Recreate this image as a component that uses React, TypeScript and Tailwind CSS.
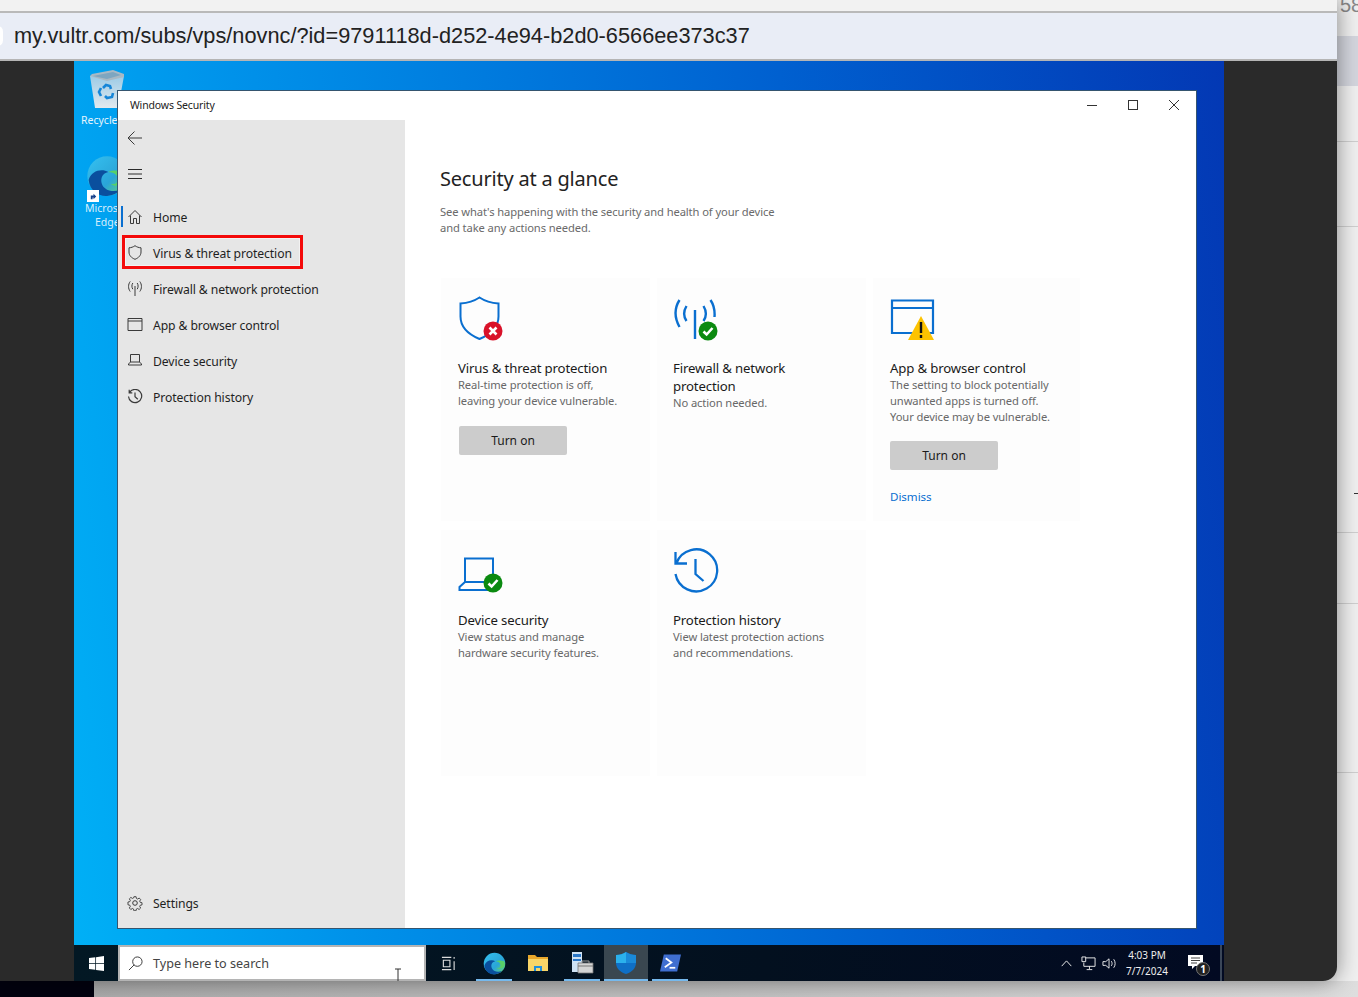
import React from "react";

const seg = "font-['Noto_Sans','Open_Sans',sans-serif]";

function Shield({ className = "" }: { className?: string }) {
  return (
    <svg viewBox="0 0 16 16" className={className} fill="none" stroke="#3a3a3a" strokeWidth="1">
      <path d="M8 .700c1.800 1.300 3.800 2 6 2.100v4.200c0 3.400-2.300 5.800-6 7.300-3.700-1.500-6-3.900-6-7.300V2.800c2.200-.1 4.200-.8 6-2.100z" />
    </svg>
  );
}

function NavIcon({ name }: { name: string }) {
  const c = "h-4 w-4 shrink-0";
  const p = { fill: "none", stroke: "#3a3a3a", strokeWidth: 1 };
  if (name === "home")
    return (
      <svg viewBox="0 0 16 16" className={c} {...p}>
        <path d="M1.500 8 8 1.500 14.500 8M3.500 6.500V14.500H6.500V9.500H9.500V14.500H12.500V6.500" />
      </svg>
    );
  if (name === "shield") return <Shield className={c} />;
  if (name === "wifi")
    return (
      <svg viewBox="0 0 16 16" className={c} {...p}>
        <path d="M8 5v10M5.800 2C4.600 4 4.600 6.200 5.800 8.200M10.200 2c1.200 2 1.200 4.200 0 6.200M3.200.500C1 3.500 1 7.500 3.200 10.500M12.800.500C15 3.500 15 7.500 12.800 10.500" />
      </svg>
    );
  if (name === "app")
    return (
      <svg viewBox="0 0 16 16" className={c} {...p}>
        <path d="M1 1.500H15V13.500H1ZM1 4H15" />
      </svg>
    );
  if (name === "device")
    return (
      <svg viewBox="0 0 16 16" className={c} {...p}>
        <path d="M3.500 1.500H12.500V9H3.500ZM3.500 9 1.500 11V12H14.500V11L12.500 9" />
      </svg>
    );
  if (name === "history")
    return (
      <svg viewBox="0 0 16 16" className={c} {...p}>
        <path d="M2.500 3.500A6.600 6.600 0 1 1 1.500 7.500M2.200.700V3.800H5.300M8 3.500V7.800L10.800 10.300" strokeWidth="1.200" />
      </svg>
    );
  return (
    <svg viewBox="0 0 16 16" className={c} {...p}>
      <circle cx="8" cy="8" r="2.300" />
      <path d="M6.800 1h2.400l.4 2 1.300.6 1.800-1.100 1.600 1.700-1.100 1.700.6 1.400 2 .4v2.400l-2 .4-.6 1.300 1.100 1.800-1.700 1.600-1.700-1.100-1.400.6-.4 2H6.800l-.4-2-1.300-.6-1.800 1.100-1.600-1.700 1.100-1.700-.6-1.400-2-.4V6.900l2-.4.600-1.300-1.100-1.800 1.700-1.600 1.700 1.100 1.400-.6z" transform="translate(.8 .8) scale(.9)" />
    </svg>
  );
}

function Badge({ kind }: { kind: "x" | "ok" }) {
  return (
    <svg viewBox="0 0 20 20" className="absolute bottom-0 right-0 h-[20px] w-[20px]">
      <circle cx="10" cy="10" r="9.500" fill={kind === "x" ? "#d9122a" : "#0b8a10"} />
      {kind === "x" ? (
        <path d="M6.500 6.500 13.500 13.500M13.500 6.500 6.500 13.500" stroke="#fff" strokeWidth="2.600" />
      ) : (
        <path d="M5.500 10.500 8.600 13.500 14.500 7" stroke="#fff" strokeWidth="2.600" fill="none" />
      )}
    </svg>
  );
}

function CardIcon({ name }: { name: string }) {
  const blue = { fill: "none", stroke: "#0a6fd0", strokeWidth: 2 };
  if (name === "virus")
    return (
      <div className="relative h-[45px] w-[45px]">
        <svg viewBox="0 0 45 45" className="h-full w-full" {...blue}>
          <path d="M21.500 1.500c5 3.300 11.500 5.500 19 6v13c0 9.500-7 17.500-19 22.500C9.500 38 2.500 30 2.500 20.500v-13c7.500-.5 14-2.700 19-6z" />
        </svg>
        <Badge kind="x" />
      </div>
    );
  if (name === "wifi")
    return (
      <div className="relative h-[45px] w-[45px]">
        <svg viewBox="0 0 45 45" className="h-full w-full" {...blue}>
          <path d="M22 14V43M13.500 10C10.500 15 10.500 20.500 13.500 25M30.500 10c3 5 3 10.500 0 15M6.500 4C1.500 12 1.500 22 6.500 31M37.500 4c3 4.500 4.500 11 4 17" strokeWidth="2.400" />
        </svg>
        <Badge kind="ok" />
      </div>
    );
  if (name === "app")
    return (
      <div className="relative h-[45px] w-[45px]">
        <svg viewBox="0 0 45 45" className="h-full w-full">
          <path d="M2 1.500H43V34H2ZM2 9H43" fill="none" stroke="#0a6fd0" strokeWidth="2.200" />
          <path d="M31 17 44 41H18Z" fill="#fdc300" />
          <path d="M31 23V34M31 36V39" stroke="#111" strokeWidth="2.400" />
        </svg>
      </div>
    );
  if (name === "device")
    return (
      <div className="relative h-[36px] w-[45px]">
        <svg viewBox="0 0 45 36" className="h-full w-full" {...blue}>
          <path d="M7 1.500H35V25H7ZM7 25 1.500 30V33H30" />
        </svg>
        <Badge kind="ok" />
      </div>
    );
  return (
    <svg viewBox="0 0 46 46" className="h-[46px] w-[46px]" fill="none" stroke="#0a6fd0" strokeWidth="2.300">
      <path d="M3.500 15A21 21 0 1 1 2.500 26M2.500 4V15.500H14M22.500 11V26L30.500 33" />
    </svg>
  );
}

type CardP = {
  icon: string;
  title: string[];
  desc: string[];
  btnClass?: string;
  iconClass?: string;
  dismiss?: boolean;
  left?: string;
};

function Card({ icon, title, desc, btnClass, iconClass = "", dismiss, left = "pl-[17px]" }: CardP) {
  return (
    <div className={`flex flex-col bg-[#fdfdfd] pt-[18px] ${left}`}>
      <div className={`mb-[18px] h-[45px] ${iconClass}`}>
        <CardIcon name={icon} />
      </div>
      <div className="text-[13.2px] leading-[18px] tracking-[-0.15px] text-[#1a1a1a]">
        {title.map((t) => (
          <div key={t}>{t}</div>
        ))}
      </div>
      <div className="text-[11.2px] leading-[16px] tracking-[-0.1px] text-[#686868]">
        {desc.map((t) => (
          <div key={t}>{t}</div>
        ))}
      </div>
      {btnClass && (
        <div className={`flex h-[29px] w-[108px] items-center justify-center rounded-[2px] bg-[#cccccc] text-[12px] text-[#1a1a1a] ${btnClass}`}>
          Turn on
        </div>
      )}
      {dismiss && <div className="mt-[18px] text-[11.6px] leading-[18px] tracking-[-0.05px] text-[#0a6fd0]">Dismiss</div>}
    </div>
  );
}

const nav = [
  ["home", "Home"],
  ["shield", "Virus & threat protection"],
  ["wifi", "Firewall & network protection"],
  ["app", "App & browser control"],
  ["device", "Device security"],
  ["history", "Protection history"],
];

function Sidebar() {
  return (
    <div className="flex w-[287px] shrink-0 flex-col bg-[#e6e6e6] pb-[7px] text-[12.2px] tracking-[-0.1px] text-[#1f1f1f]">
      <div className="flex h-[36px] items-center pb-[1px] pl-[9px]">
        <svg viewBox="0 0 16 16" className="h-4 w-4" fill="none" stroke="#3a3a3a" strokeWidth="1">
          <path d="M15 8H1M7.500 1.500 1 8l6.500 6.500" />
        </svg>
      </div>
      <div className="flex h-[36px] items-center pl-[9px]">
        <svg viewBox="0 0 16 16" className="h-4 w-4" fill="none" stroke="#2a2a2a" strokeWidth="1.100">
          <path d="M1 3.500H15M1 8H15M1 12.500H15" />
        </svg>
      </div>
      <div className="flex flex-col pt-[7px]">
        {nav.map(([i, t], idx) => (
          <div key={t} className="relative flex h-[36px] items-center gap-[10px] pl-[9px]">
            {idx === 0 && <div className="absolute left-[3px] top-[7px] h-[21px] w-[2px] bg-[#0a6fd0]" />}
            {idx === 1 && (
              <div className="absolute left-[4px] top-[0px] h-[34px] w-[181px] border-[3px] border-[#f40a0a] shadow-[inset_0_0_0_1px_#f2f2f2]" />
            )}
            <NavIcon name={i} />
            <span className="pt-[2px]">{t}</span>
          </div>
        ))}
      </div>
      <div className="mt-auto flex h-[36px] items-center gap-[10px] pl-[9px]">
        <NavIcon name="gear" />
        <span className="pt-[2px]">Settings</span>
      </div>
    </div>
  );
}

function SecurityWindow() {
  return (
    <div className={`absolute left-[43px] top-[29px] flex h-[839px] w-[1080px] flex-col border border-[#35556f] bg-white ${seg}`}>
      <div className="flex h-[29px] shrink-0 items-center justify-between pl-[12px] text-[10.5px] tracking-[-0.15px] text-[#222]">
        <span>Windows Security</span>
        <div className="flex items-center gap-[31px] pb-[1px] pr-[17px]">
          <div className="h-px w-[10px] bg-[#333]" />
          <div className="h-[10px] w-[10px] border border-[#333]" />
          <svg viewBox="0 0 10 10" className="h-[10px] w-[10px]" stroke="#333" strokeWidth="1">
            <path d="M0 0 10 10M10 0 0 10" />
          </svg>
        </div>
      </div>
      <div className="flex min-h-0 flex-1">
        <Sidebar />
        <div className="flex-1 pl-[35px] pt-[43px]">
          <div className="text-[20px] leading-[32px] tracking-[-0.2px] text-[#222]">Security at a glance</div>
          <div className="mt-[9px] text-[11.2px] leading-[16px] tracking-[-0.1px] text-[#6a6a6a]">
            <div>See what's happening with the security and health of your device</div>
            <div>and take any actions needed.</div>
          </div>
          <div className="ml-[1px] mt-[42px] grid w-[640px] grid-cols-[209px_209px_207px] grid-rows-[243px_246px] gap-x-[7px] gap-y-[9px]">
            <Card icon="virus" title={["Virus & threat protection"]} desc={["Real-time protection is off,", "leaving your device vulnerable."]} btnClass="mt-[17px] ml-[1px]" />
            <Card icon="wifi" title={["Firewall & network", "protection"]} desc={["No action needed."]} left="pl-[16px]" />
            <Card icon="app" iconClass="pt-[3px]" title={["App & browser control"]} desc={["The setting to block potentially", "unwanted apps is turned off.", "Your device may be vulnerable."]} btnClass="mt-[16px]" dismiss />
            <Card icon="device" iconClass="pt-[9px]" title={["Device security"]} desc={["View status and manage", "hardware security features."]} />
            <Card icon="history" title={["Protection history"]} desc={["View latest protection actions", "and recommendations."]} left="pl-[16px]" />
          </div>
        </div>
      </div>
    </div>
  );
}

function EdgeLogo({ size }: { size: number }) {
  return (
    <svg viewBox="0 0 32 32" width={size} height={size}>
      <defs>
        <linearGradient id={`e${size}`} x1="0" y1="0" x2="1" y2="1">
          <stop offset="0" stopColor="#35c1f1" />
          <stop offset="0.6" stopColor="#2aa5d8" />
          <stop offset="1" stopColor="#6bdc6b" />
        </linearGradient>
      </defs>
      <circle cx="16" cy="16" r="15" fill={`url(#e${size})`} />
      <path d="M2 19C3 28 11 32 17 31c4-.5 7-2 9-4.500-5 2-11 1-13.500-3.500C10.500 19 12 14 17 13c-5-3-13-1-15 6z" fill="#0a4f9e" />
      <path d="M17 13c5 0 8 3 7 7-.5 2-3 2.500-5 2 2 2 7 2 10-1 2-2 2-6 0-8-3-1-8-2-12 0z" fill="#58d068" />
    </svg>
  );
}

function Desktop() {
  return (
    <div className="relative min-h-0 flex-1 overflow-hidden bg-[linear-gradient(82deg,#00b0f6_0%,#0092ea_22%,#0060d0_65%,#0338b4_100%)]">
      <div className={`absolute left-[7px] top-[8px] flex w-[70px] flex-col text-[10.5px] leading-[14px] text-[#e6f4fd] ${seg}`}>
        <svg viewBox="0 0 36 40" className="ml-[8px] h-[40px] w-[36px]">
          <defs>
            <linearGradient id="bin" x1="0" y1="0" x2="0" y2="1">
              <stop offset="0" stopColor="#9ccbe6" />
              <stop offset="1" stopColor="#e2e9ee" />
            </linearGradient>
          </defs>
          <path d="M1 7 6 39H29L35 7Z" fill="url(#bin)" />
          <path d="M1 7 3 5 24 1 35 5V8L18 12Z" fill="#a9b9c4" />
          <path d="M4 7 24 3 32 6 18 10Z" fill="#7ea6c0" />
          <path d="M14 19l3-3 4 1 1 3M24 24l-1 4-5 1-2-2M12 27l-2-4 2-4" fill="none" stroke="#1686d8" strokeWidth="2.600" />
        </svg>
        <span className="mt-[4px] whitespace-nowrap">Recycle Bin</span>
      </div>
      <div className={`absolute left-[5px] top-[94px] flex w-[66px] flex-col items-center text-[10.5px] leading-[14px] text-[#d8eefc] ${seg}`}>
        <div className="relative mr-[17px] h-[42px] w-[42px] self-end">
          <EdgeLogo size={42} />
          <div className="absolute bottom-[-5px] left-[1px] flex h-[12px] w-[12px] items-center justify-center bg-white">
            <svg viewBox="0 0 10 10" className="h-[9px] w-[9px]"><path d="M2 8V4h3V2l3 3-3 3V6H4v2Z" fill="#17408a" /></svg>
          </div>
        </div>
        <span className="mt-[4px] self-start pl-[6px]">Microsoft</span>
        <span className="self-start pl-[16px]">Edge</span>
      </div>
      <SecurityWindow />
    </div>
  );
}

function TaskIcon({ children, active, line }: { children: React.ReactNode; active?: boolean; line?: boolean }) {
  return (
    <div className={`relative flex h-full w-[44px] items-center justify-center ${active ? "bg-[#3a4750]" : ""}`}>
      {children}
      {line && <div className={`absolute bottom-0 h-[2px] bg-[#76b9ed] ${active ? "inset-x-0" : "inset-x-[4px]"}`} />}
    </div>
  );
}

function Taskbar() {
  return (
    <div className={`flex h-[36px] shrink-0 items-stretch bg-[linear-gradient(90deg,#031824,#03101f_60%,#020a22)] ${seg}`}>
      <div className="flex w-[44px] items-center justify-center">
        <svg viewBox="0 0 16 16" className="h-[15px] w-[15px]" fill="#fff">
          <path d="M0 2.200 6.700 1.300V7.500H0ZM7.500 1.200 16 0V7.500H7.500ZM0 8.300H6.700V14.700L0 13.800ZM7.500 8.300H16V16L7.500 14.800Z" />
        </svg>
      </div>
      <div className="relative flex w-[308px] items-center gap-[10px] border-2 border-[#b4b4b4] bg-white pl-[8px] text-[12.6px] text-[#444]">
        <svg viewBox="0 0 16 16" className="h-[15px] w-[15px]" fill="none" stroke="#333" strokeWidth="1">
          <circle cx="10" cy="6" r="5" />
          <path d="M6.500 9.500 1 15" />
        </svg>
        <span className="pt-[2px]">Type here to search</span>
        <svg viewBox="0 0 8 14" className="absolute bottom-[-3px] left-[274px] h-[14px] w-[8px]" fill="none" stroke="#333" strokeWidth="1">
          <path d="M1 1H7M4 1V13" />
        </svg>
      </div>
      <div className="flex items-stretch">
        <TaskIcon>
          <svg viewBox="0 0 16 16" className="h-[15px] w-[15px]" fill="none" stroke="#ddd" strokeWidth="1.200">
            <path d="M1 1.500H11M1 14.500H11M2.500 4.500H9.500V11.500H2.500ZM14 1V3M14 5.500V15" />
          </svg>
        </TaskIcon>
        <div className="w-[2px]" />
        <TaskIcon line><EdgeLogo size={23} /></TaskIcon>
        <TaskIcon>
          <svg viewBox="0 0 20 18" className="h-[18px] w-[20px]">
            <path d="M0 1h7l2 2h11v14H0Z" fill="#e8a72c" />
            <path d="M0 5h20v12H0Z" fill="#f8d568" />
            <path d="M6 17v-5h8v5h-2v-3H8v3Z" fill="#1f8fdc" />
          </svg>
        </TaskIcon>
        <TaskIcon line>
          <svg viewBox="0 0 23 22" className="h-[22px] w-[23px]">
            <path d="M1 0h10v20H1Z" fill="#cfe3f5" />
            <path d="M2 2h8v3H2ZM2 7h8v2H2Z" fill="#2c78c8" />
            <path d="M7 11h15v10H7Z" fill="#d4d4d4" stroke="#777" strokeWidth=".8" />
            <path d="M7 14h15" stroke="#777" strokeWidth="1" />
            <path d="M11 11V9h7v2" fill="none" stroke="#999" strokeWidth="1" />
          </svg>
        </TaskIcon>
        <TaskIcon active line>
          <svg viewBox="0 0 20 22" className="h-[22px] w-[20px]">
            <path d="M10 0C7 2 4 3 0 3v8c0 5 4 9 10 11 6-2 10-6 10-11V3c-4 0-7-1-10-3z" fill="#0f6fc6" />
            <path d="M10 0C7 2 4 3 0 3v8h10z" fill="#2bb1ec" />
            <path d="M10 0c3 2 6 3 10 3v8H10z" fill="#1a8ad9" />
          </svg>
        </TaskIcon>
        <TaskIcon line>
          <svg viewBox="0 0 22 18" className="h-[18px] w-[21px]">
            <path d="M4 0h18l-4 18H0Z" fill="#3f6ed0" />
            <path d="M6 4l6 4.500-7 5" fill="none" stroke="#fff" strokeWidth="1.800" />
            <path d="M10 14h6" stroke="#fff" strokeWidth="1.800" />
          </svg>
        </TaskIcon>
      </div>
      <div className="ml-auto flex items-center text-white">
        <svg viewBox="0 0 12 8" className="mr-[9px] h-[7px] w-[11px]" fill="none" stroke="#eee" strokeWidth="1.100">
          <path d="M.5 7 6 1l5.500 6" />
        </svg>
        <svg viewBox="0 0 16 16" className="mr-[6px] h-[15px] w-[15px]" fill="none" stroke="#eee" strokeWidth="1">
          <path d="M5 2h10v9H3V7M1 1h4v5H1ZM9 11v3M6 14.500h6" />
        </svg>
        <svg viewBox="0 0 16 16" className="mr-[7px] h-[15px] w-[15px]" fill="none" stroke="#eee" strokeWidth="1">
          <path d="M1 6v4h3l3.500 3V3L4 6ZM10 5.500c1 1.500 1 3.500 0 5M12.500 3.500c2 2.500 2 6.500 0 9" />
        </svg>
        <div className="flex w-[46px] flex-col items-center text-[10px] leading-[16px] text-[#eee]">
          <span>4:03 PM</span>
          <span>7/7/2024</span>
        </div>
        <div className="relative ml-[18px] mr-[17px] h-[16px] w-[15px]">
          <svg viewBox="0 0 15 14" className="h-[14px] w-[15px]">
            <path d="M0 0H15V11H7L4 14V11H0Z" fill="#fff" />
            <path d="M3 3H12M3 5.500H12M3 8H9" stroke="#444" strokeWidth="1" />
          </svg>
          <div className="absolute bottom-[-5px] right-[-7px] flex h-[14px] w-[14px] items-center justify-center rounded-full border border-[#777] bg-[#222] text-[10px] font-bold text-white">1</div>
        </div>
        <div className="h-full w-[2px] bg-[#3a4658]" />
        <div className="w-[2px]" />
      </div>
    </div>
  );
}

export default function App() {
  return (
    <div className="relative flex h-[997px] w-[1358px] flex-col overflow-hidden bg-[#ececec] font-['Liberation_Sans',sans-serif]">
      <div className="flex h-[981px] shrink-0">
        <div className="z-10 flex w-[1337px] shrink-0 flex-col overflow-hidden rounded-br-[14px] shadow-[0_0_22px_rgba(0,0,0,0.45)]">
          <div className="h-[13px] shrink-0 border-b-2 border-[#b9b9b9] bg-[#f2f2f2]" />
          <div className="relative flex h-[48px] shrink-0 items-center border-b-2 border-[#b5b5b5] bg-[#e9edf6] pl-[14px] text-[21.75px] text-[#222]">
            <div className="absolute left-[-8px] top-[13px] h-[20px] w-[11px] rounded-full bg-white" />
            my.vultr.com/subs/vps/novnc/?id=9791118d-d252-4e94-b2d0-6566ee373c37
          </div>
          <div className="flex min-h-0 flex-1 bg-[#2a2a2a] pl-[74px] pr-[113px]">
            <div className="flex min-w-0 flex-1 flex-col">
              <Desktop />
              <Taskbar />
            </div>
          </div>
        </div>
        <div className="relative flex flex-1 flex-col bg-[#f0f0f0]">
          <div className="h-[36px] pl-[3px] text-[20px] leading-[10px] text-[#888]">58</div>
          <div className="h-[50px] bg-[#d4d6de]" />
          <div className="h-[56px] border-b border-[#cfcfcf]" />
          <div className="h-[85px] border-b border-[#cfcfcf]" />
          <div className="h-[306px] border-b border-[#cfcfcf]" />
          <div className="h-[71px] border-b border-[#cfcfcf]" />
          <div className="h-[169px] border-b border-[#cfcfcf]" />
          <div className="absolute left-[17px] top-[493px] h-px w-[4px] bg-[#333]" />
        </div>
      </div>
      <div className="flex flex-1 bg-[linear-gradient(90deg,#a9a9a9,#c0c0c0_50%,#dedede)]">
        <div className="w-[94px] bg-[#02020f]" />
      </div>
    </div>
  );
}
